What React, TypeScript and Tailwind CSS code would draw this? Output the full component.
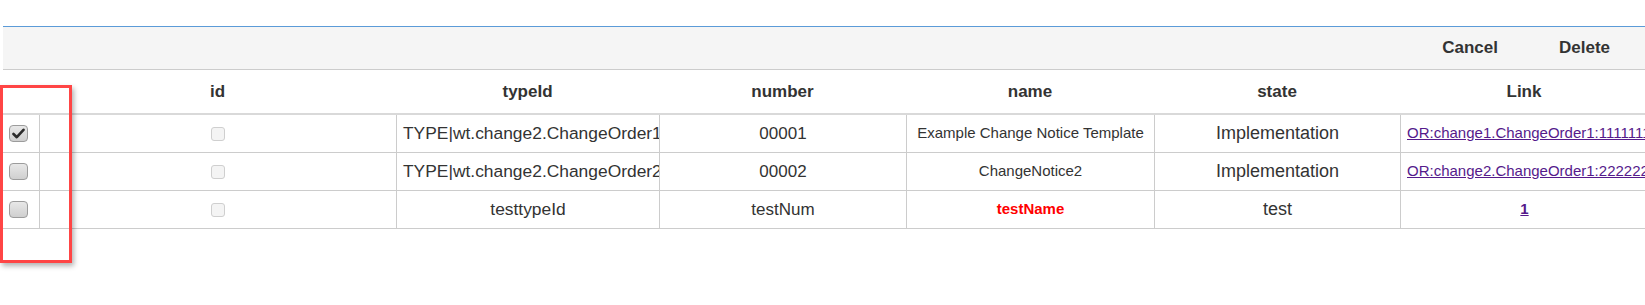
import React from "react";

type Row = {
  checked: boolean;
  typeId: string;
  number: string;
  name: string;
  state: string;
  link: string;
  test?: boolean;
};

const rows: Row[] = [
  {
    checked: true,
    typeId: "TYPE|wt.change2.ChangeOrder1",
    number: "00001",
    name: "Example Change Notice Template",
    state: "Implementation",
    link: "OR:change1.ChangeOrder1:111111111",
  },
  {
    checked: false,
    typeId: "TYPE|wt.change2.ChangeOrder2",
    number: "00002",
    name: "ChangeNotice2",
    state: "Implementation",
    link: "OR:change2.ChangeOrder1:222222222",
  },
  {
    checked: false,
    typeId: "testtypeId",
    number: "testNum",
    name: "testName",
    state: "test",
    link: "1",
    test: true,
  },
];

const cols = "grid grid-cols-[36px_357px_263px_247px_248px_246px_248px]";

const SelectBox = ({ checked }: { checked: boolean }) => (
  <div className="ml-[6px] flex h-[17px] w-[19px] items-center justify-center rounded-[4px] border border-[#9c9c9c] bg-gradient-to-b from-[#e8e8e8] to-[#cfcfcf]">
    {checked && (
      <svg width="13" height="11" viewBox="0 0 13 11">
        <path d="M1.5 6 L4.8 9.2 L11.5 1.8" fill="none" stroke="#2b2b2b" strokeWidth="2.6" strokeLinecap="round" strokeLinejoin="round" />
      </svg>
    )}
  </div>
);

const App = () => {
  return (
    <div className="relative h-[305px] w-[1645px] overflow-hidden bg-white pl-[3px] pt-[26px] font-['Liberation_Sans',Arial,sans-serif] text-[#333]">
      <div className="flex h-[44px] items-center justify-end gap-[61px] border-t border-b border-t-[#5b9bd8] border-b-[#cccccc] bg-[#f5f5f5] pr-[35px] text-[17px] font-bold">
        <span>Cancel</span>
        <span>Delete</span>
      </div>

      <div className="w-[1645px]">
        <div className={`${cols} h-[45px] items-center border-b-2 border-[#d9d9d9] text-center text-[17px] font-bold`}>
          <div />
          <div>id</div>
          <div>typeId</div>
          <div>number</div>
          <div>name</div>
          <div>state</div>
          <div>Link</div>
        </div>

        {rows.map((r) => (
          <div key={r.number} className={`${cols} h-[38px] border-b border-[#cccccc] text-center`}>
            <div className="flex items-center">
              <SelectBox checked={r.checked} />
            </div>
            <div className="flex items-center justify-center border-l border-[#cccccc]">
              <div className="h-[14px] w-[14px] rounded-[3px] border border-[#cfcfcf] bg-[#f4f4f4]" />
            </div>
            <div className="flex items-center overflow-hidden whitespace-nowrap border-l border-[#cccccc] px-[6px] text-[17.4px]">
              <span className={r.test ? "w-full text-center" : ""}>{r.typeId}</span>
            </div>
            <div className="flex items-center justify-center border-l border-[#cccccc] text-[17px]">{r.number}</div>
            <div
              className={`flex items-center justify-center border-l border-[#cccccc] text-[15px] ${
                r.test ? "font-bold text-[#ff0000]" : ""
              }`}
            >
              {r.name}
            </div>
            <div className="flex items-center justify-center border-l border-[#cccccc] text-[18px]">{r.state}</div>
            <div
              className={`flex items-center overflow-hidden whitespace-nowrap border-l border-[#cccccc] px-[6px] text-[15px] ${
                r.test ? "justify-center font-bold" : ""
              }`}
            >
              <a href="#" className="text-[#551a8b] underline">
                {r.link}
              </a>
            </div>
          </div>
        ))}
      </div>

      <div className="absolute left-0 top-[85px] h-[178px] w-[72px] border-[3px] border-[#ff4545] shadow-[2px_3px_5px_rgba(0,0,0,0.3)]" />
    </div>
  );
};

export default App;
